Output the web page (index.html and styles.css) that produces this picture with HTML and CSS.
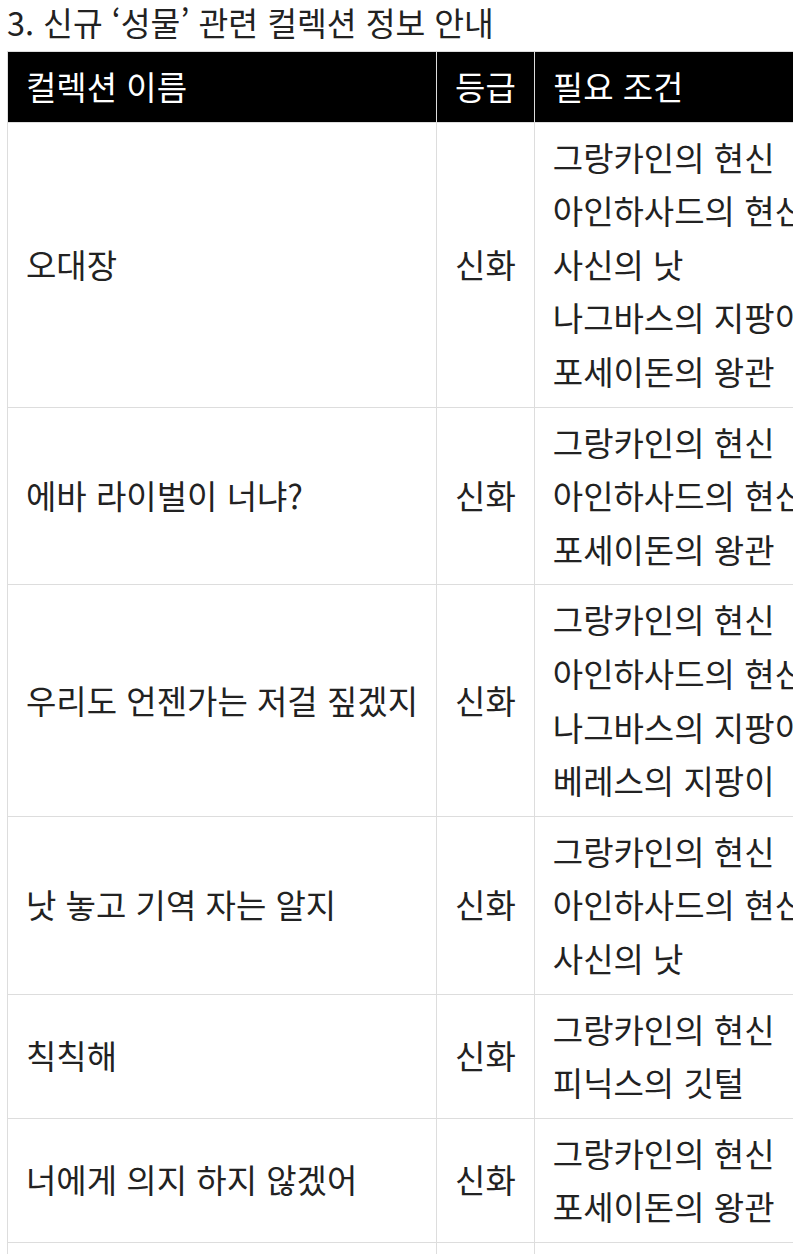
FILE: index.html
```html
<!DOCTYPE html>
<html lang="ko">
<head>
<meta charset="utf-8">
<title>신규 성물 관련 컬렉션 정보 안내</title>
<link rel="stylesheet" href="styles.css">
</head>
<body>
<h3 class="section-title">3. 신규 ‘성물’ 관련 컬렉션 정보 안내</h3>
<table class="collection-table">
  <thead>
    <tr>
      <th>컬렉션 이름</th>
      <th>등급</th>
      <th>필요 조건</th>
    </tr>
  </thead>
  <tbody>
    <tr>
      <td>오대장</td>
      <td>신화</td>
      <td>그랑카인의 현신<br>아인하사드의 현신<br>사신의 낫<br>나그바스의 지팡이<br>포세이돈의 왕관</td>
    </tr>
    <tr>
      <td>에바 라이벌이 너냐?</td>
      <td>신화</td>
      <td>그랑카인의 현신<br>아인하사드의 현신<br>포세이돈의 왕관</td>
    </tr>
    <tr>
      <td>우리도 언젠가는 저걸 짚겠지</td>
      <td>신화</td>
      <td>그랑카인의 현신<br>아인하사드의 현신<br>나그바스의 지팡이<br>베레스의 지팡이</td>
    </tr>
    <tr>
      <td>낫 놓고 기역 자는 알지</td>
      <td>신화</td>
      <td>그랑카인의 현신<br>아인하사드의 현신<br>사신의 낫</td>
    </tr>
    <tr>
      <td>칙칙해</td>
      <td>신화</td>
      <td>그랑카인의 현신<br>피닉스의 깃털</td>
    </tr>
    <tr>
      <td>너에게 의지 하지 않겠어</td>
      <td>신화</td>
      <td>그랑카인의 현신<br>포세이돈의 왕관</td>
    </tr>
    <tr>
      <td>&nbsp;</td>
      <td>&nbsp;</td>
      <td>&nbsp;</td>
    </tr>
  </tbody>
</table>
</body>
</html>
```
FILE: styles.css
```css
html {
  overflow-x: hidden;
}

body {
  margin: 0 7px;
  background: #ffffff;
  color: #222222;
  font-family: "Noto Sans CJK KR", "Noto Sans", sans-serif;
}

.section-title {
  margin: 0 0 7px;
  font-size: 32.4px;
  line-height: 44px;
  font-weight: 400;
  color: #222222;
}

.collection-table {
  border-collapse: collapse;
  font-size: 33px;
  line-height: 53.6px;
}

.collection-table th,
.collection-table td {
  border: 1px solid #dddddd;
  padding: 8px 18px;
  text-align: left;
  vertical-align: middle;
  white-space: nowrap;
  font-weight: 400;
}

.collection-table th {
  background: #000000;
  color: #ffffff;
}
```
